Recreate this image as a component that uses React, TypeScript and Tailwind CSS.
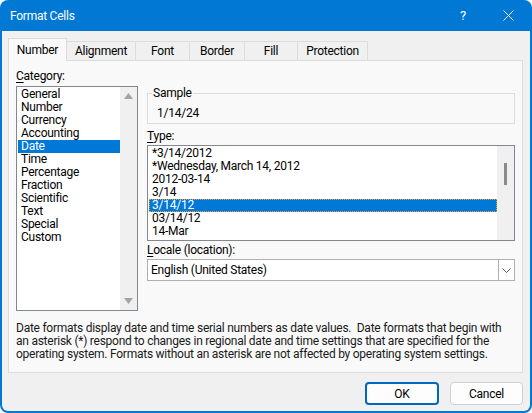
import React from 'react'

const categories = ['General', 'Number', 'Currency', 'Accounting', 'Date', 'Time', 'Percentage', 'Fraction', 'Scientific', 'Text', 'Special', 'Custom']
const types = ['*3/14/2012', '*Wednesday, March 14, 2012', '2012-03-14', '3/14', '3/14/12', '03/14/12', '14-Mar']

const tabs = [
  { label: 'Number', w: 'w-[59px]' },
  { label: 'Alignment', w: 'w-[69px]' },
  { label: 'Font', w: 'w-[54px]' },
  { label: 'Border', w: 'w-[55px]' },
  { label: 'Fill', w: 'w-[53px]' },
  { label: 'Protection', w: 'w-[70px]' },
]

export default function App() {
  return (
    <div className="w-[532px] h-[413px] bg-white" style={{ fontFamily: '"Segoe UI", Roboto, sans-serif' }}>
      <div className="w-full h-full flex flex-col rounded-lg bg-[#0078d4] overflow-hidden text-[12px] tracking-[-0.25px] text-black">
        <TitleBar />
        <div className="flex-1 flex flex-col mx-[2px] mb-[2px] bg-[#f0f0f0] rounded-b-md">
          <div className="flex pl-[6px] pt-[7px] h-[29px]">
            {tabs.map((t, i) => (
              <Tab key={t.label} label={t.label} w={t.w} selected={i === 0} />
            ))}
          </div>
          <div className="ml-[6px] mr-[7px] h-[313px] border border-[#dcdcdc] bg-[#f9f9f9] flex flex-col px-[7px]">
            <div className="flex gap-[9px] pt-[9px]">
              <CategoryColumn />
              <RightColumn />
            </div>
            <p className="mt-[11px] leading-[13px] whitespace-nowrap text-[#1a1a1a]">
              Date formats display date and time serial numbers as date values.&nbsp; Date formats that begin with<br />
              an asterisk (*) respond to changes in regional date and time settings that are specified for the<br />
              operating system. Formats without an asterisk are not affected by operating system settings.
            </p>
          </div>
          <div className="flex justify-end gap-[11px] pr-[7px] pt-[9px]">
            <button className="w-[74px] h-[23px] rounded-[4px] border-2 border-[#0067c0] bg-[#fdfdfd] text-[12px] leading-none">
              OK
            </button>
            <button className="w-[73px] h-[23px] rounded-[4px] border border-[#d0d0d0] bg-[#fdfdfd] text-[12px] leading-none">
              Cancel
            </button>
          </div>
        </div>
      </div>
    </div>
  )
}

function TitleBar() {
  return (
    <div className="h-[31px] flex items-center text-white shrink-0">
      <span className="pl-[10px] text-[12px]">Format Cells</span>
      <span className="ml-auto mr-[37px] text-[13px]">?</span>
      <svg className="w-[11px] h-[11px] mr-[18px]" viewBox="0 0 11 11" fill="none" stroke="white" strokeWidth={1}>
        <path d="M0.5 0.5L10.5 10.5M10.5 0.5L0.5 10.5" />
      </svg>
    </div>
  )
}

function Tab({ label, w, selected }: { label: string; w: string; selected: boolean }) {
  if (selected) {
    return (
      <div className={`${w} h-[23px] -mb-px relative z-10 border border-b-0 border-[#dcdcdc] bg-[#f9f9f9] flex items-center justify-center`}>
        {label}
      </div>
    )
  }
  return (
    <div className={`${w} h-[19px] mt-[3px] border border-b-0 border-l-0 border-[#dcdcdc] bg-[#f0f0f0] flex items-center justify-center`}>
      {label}
    </div>
  )
}

function CategoryColumn() {
  return (
    <div className="w-[122px] shrink-0 flex flex-col">
      <div className="h-[13px] leading-[13px]">
        <span className="underline underline-offset-2">C</span>ategory:
      </div>
      <div className="mt-[3px] h-[225px] border border-[#828790] bg-white flex">
        <div className="flex-1 pt-px pl-px">
          {categories.map(c => (
            <div
              key={c}
              className={`h-[13px] leading-[13px] pl-[3px] ${c === 'Date' ? 'bg-[#0078d7] text-white' : ''}`}
            >
              {c}
            </div>
          ))}
        </div>
        <div className="w-[17px] bg-[#f0f0f0] flex flex-col items-center justify-between py-[6px]">
          <svg width="9" height="6" viewBox="0 0 9 6"><path d="M4.5 0L9 6H0z" fill="#a3a3a3" /></svg>
          <svg width="9" height="6" viewBox="0 0 9 6"><path d="M0 0H9L4.5 6z" fill="#a3a3a3" /></svg>
        </div>
      </div>
    </div>
  )
}

function RightColumn() {
  return (
    <div className="flex-1 flex flex-col">
      <fieldset className="mt-[17px] h-[37px] border border-[#dcdcdc] px-[4px] m-0">
        <legend className="px-[1px] leading-[13px]">Sample</legend>
        <div className="pl-[5px] pt-[7px] leading-[13px]">1/14/24</div>
      </fieldset>
      <div className="mt-[6px] h-[13px] leading-[13px]">
        <span className="underline underline-offset-2">T</span>ype:
      </div>
      <div className="mt-[2px] h-[96px] border border-[#828790] bg-white flex">
        <div className="flex-1 pt-px pl-px">
          {types.map(t => (
            <div
              key={t}
              className={`h-[13px] leading-[13px] pl-[3px] ${t === '3/14/12' ? 'bg-[#0078d7] text-white outline-1 outline-dotted outline-[#e8a33d] -outline-offset-1' : ''}`}
            >
              {t}
            </div>
          ))}
        </div>
        <div className="w-[17px] bg-[#f0f0f0] flex justify-center pt-[17px]">
          <div className="w-[3px] h-[22px] bg-[#8a8a8a]" />
        </div>
      </div>
      <div className="mt-[3px] h-[13px] leading-[13px]">
        <span className="underline underline-offset-2">L</span>ocale (location):
      </div>
      <div className="mt-[2px] h-[22px] border border-[#b0b0b0] bg-white flex items-center">
        <span className="pl-[3px] flex-1">English (United States)</span>
        <div className="w-[16px] h-[20px] border-l border-[#b0b0b0] flex items-center justify-center">
          <svg width="9" height="5" viewBox="0 0 9 5" fill="none" stroke="#5a5a5a" strokeWidth={1}>
            <path d="M0.5 0.5L4.5 4.5L8.5 0.5" />
          </svg>
        </div>
      </div>
    </div>
  )
}
